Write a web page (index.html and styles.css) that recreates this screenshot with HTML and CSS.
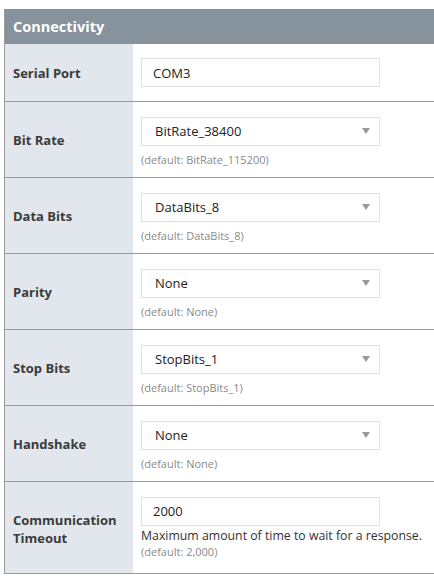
FILE: index.html
```html
<!DOCTYPE html>
<html>
<head>
<meta charset="utf-8">
<link rel="stylesheet" href="styles.css">
</head>
<body>
<div class="panel">
  <div class="panel-head">Connectivity</div>
  <div class="row row-short">
    <div class="label">Serial Port</div>
    <div class="value">
      <div class="field text-field">COM3</div>
    </div>
  </div>
  <div class="row">
    <div class="label">Bit Rate</div>
    <div class="value value-select">
      <div class="field select-field"><span>BitRate_38400</span><span class="caret"></span></div>
      <div class="default">(default: BitRate_115200)</div>
    </div>
  </div>
  <div class="row">
    <div class="label">Data Bits</div>
    <div class="value value-select">
      <div class="field select-field"><span>DataBits_8</span><span class="caret"></span></div>
      <div class="default">(default: DataBits_8)</div>
    </div>
  </div>
  <div class="row">
    <div class="label">Parity</div>
    <div class="value value-select">
      <div class="field select-field"><span>None</span><span class="caret"></span></div>
      <div class="default">(default: None)</div>
    </div>
  </div>
  <div class="row">
    <div class="label">Stop Bits</div>
    <div class="value value-select">
      <div class="field select-field"><span>StopBits_1</span><span class="caret"></span></div>
      <div class="default">(default: StopBits_1)</div>
    </div>
  </div>
  <div class="row">
    <div class="label">Handshake</div>
    <div class="value value-select">
      <div class="field select-field"><span>None</span><span class="caret"></span></div>
      <div class="default">(default: None)</div>
    </div>
  </div>
  <div class="row row-tall">
    <div class="label"><span class="label-lines">Communication<br>Timeout</span></div>
    <div class="value">
      <div class="field text-field">2000</div>
      <div class="desc">Maximum amount of time to wait for a response.</div>
      <div class="default">(default: 2,000)</div>
    </div>
  </div>
</div>
</body>
</html>
```
FILE: styles.css
```css
html, body {
  margin: 0;
  padding: 0;
  background: #ffffff;
}
body {
  font-family: "Open Sans", "Noto Sans", sans-serif;
  color: #333333;
  overflow: hidden;
}
.panel {
  margin: 9px 0 0 4px;
  border-left: 1px solid #9a9a9a;
}
.panel-head {
  height: 35px;
  background: #86929c;
  color: #ffffff;
  font-weight: 700;
  font-size: 14.5px;
  line-height: 35px;
  padding-left: 8px;
  box-sizing: border-box;
}
.row {
  display: grid;
  grid-template-columns: 128px 1fr;
  height: 76px;
  border-bottom: 1px solid #9a9a9a;
  box-sizing: border-box;
}
.row-short { height: 58px; }
.row-tall { height: 92px; }
.label {
  background: #e1e7ed;
  display: flex;
  align-items: center;
  padding-left: 8px;
  font-weight: 700;
  font-size: 13px;
  line-height: 18px;
  color: #3b3b3b;
}
.label-lines {
  display: block;
  line-height: 18px;
  margin-top: 2px;
}
.value {
  display: flex;
  flex-direction: column;
  justify-content: center;
  padding-left: 8px;
}
.value-select { padding-top: 4px; }
.field {
  width: 239px;
  height: 29px;
  flex: none;
  box-sizing: border-box;
  border: 1px solid #e3e3e3;
  font-size: 13px;
  display: flex;
  align-items: center;
  color: #222222;
}
.text-field { padding-left: 11px; }
.select-field {
  padding-left: 13px;
  padding-right: 9px;
  justify-content: space-between;
}
.caret {
  width: 0;
  height: 0;
  border-left: 4px solid transparent;
  border-right: 4px solid transparent;
  border-top: 6px solid #9a9a9a;
}
.default {
  font-size: 11px;
  color: #8a8a8a;
  margin-top: 6px;
  line-height: 15px;
}
.desc {
  font-size: 12.3px;
  color: #333333;
  margin-top: 1px;
  line-height: 17px;
}
.desc + .default { margin-top: 0; }
```
